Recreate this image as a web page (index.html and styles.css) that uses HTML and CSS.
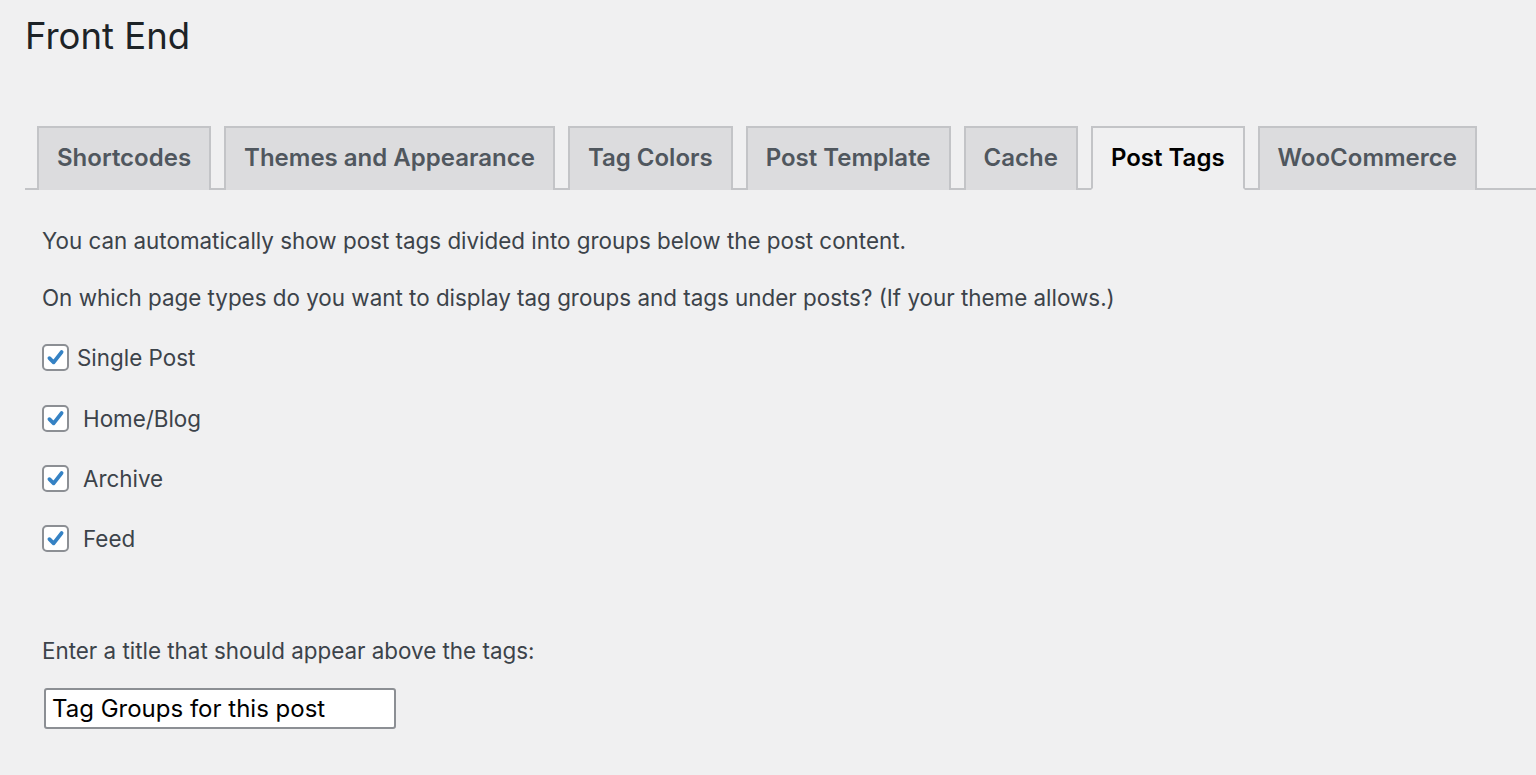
FILE: index.html
```html
<!DOCTYPE html>
<html lang="en">
<head>
    <meta charset="UTF-8">
    <meta name="viewport" content="width=device-width, initial-scale=1.0">
    <title>Front End</title>
    <link rel="stylesheet" href="styles.css">
</head>
<body>
    <div class="wrap">
        <h1>Front End</h1>

        <nav class="nav-tabs">
            <a href="#" class="nav-tab">Shortcodes</a>
            <a href="#" class="nav-tab">Themes and Appearance</a>
            <a href="#" class="nav-tab">Tag Colors</a>
            <a href="#" class="nav-tab">Post Template</a>
            <a href="#" class="nav-tab">Cache</a>
            <a href="#" class="nav-tab nav-tab-active">Post Tags</a>
            <a href="#" class="nav-tab">WooCommerce</a>
        </nav>

        <div class="tab-content">
            <p>You can automatically show post tags divided into groups below the post content.</p>
            <p>On which page types do you want to display tag groups and tags under posts? (If your theme allows.)</p>

            <ul class="checks">
                <li class="check-row check-tight">
                    <span class="box"><svg viewBox="0 0 20 20"><path d="M4.2 10.6 L8.2 14.6 L15.8 4.8"/></svg></span>
                    <label>Single Post</label>
                </li>
                <li class="check-row">
                    <span class="box"><svg viewBox="0 0 20 20"><path d="M4.2 10.6 L8.2 14.6 L15.8 4.8"/></svg></span>
                    <label>Home/Blog</label>
                </li>
                <li class="check-row">
                    <span class="box"><svg viewBox="0 0 20 20"><path d="M4.2 10.6 L8.2 14.6 L15.8 4.8"/></svg></span>
                    <label>Archive</label>
                </li>
                <li class="check-row">
                    <span class="box"><svg viewBox="0 0 20 20"><path d="M4.2 10.6 L8.2 14.6 L15.8 4.8"/></svg></span>
                    <label>Feed</label>
                </li>
            </ul>

            <p class="title-label">Enter a title that should appear above the tags:</p>
            <input type="text" class="title-input" value="Tag Groups for this post">
        </div>
    </div>
</body>
</html>
```

FILE: styles.css
```css
body {
    margin: 0;
    background-color: #f0f0f1;
    color: #3c434a;
    font-family: Inter, "Noto Sans", sans-serif;
}
.wrap {
    padding: 10px 0 0 25px;
}
h1 {
    font-size: 36.5px;
    font-weight: 400;
    color: #1d2327;
    margin: 0;
    line-height: 52px;
}

/* tabs */
.nav-tabs {
    display: flex;
    gap: 13px;
    margin-top: 64px;
    padding-left: 12px;
    border-bottom: 2px solid #c3c4c7;
}
.nav-tab {
    display: block;
    background-color: #dcdcde;
    border: 2px solid #c3c4c7;
    border-bottom: none;
    color: #50575e;
    font-size: 24px;
    font-weight: 600;
    line-height: 60px;
    padding: 0 18px;
    margin-bottom: -2px;
    text-decoration: none;
}
.nav-tab-active {
    background-color: #f0f0f1;
    color: #000;
    border-bottom: 2px solid #f0f0f1;
}

/* content */
.tab-content {
    padding-left: 17px;
    font-size: 22.4px;
}
.tab-content p {
    margin: 0;
    line-height: 32px;
}
.tab-content p:first-child {
    margin-top: 35px;
}
.tab-content p + p {
    margin-top: 25px;
}
.checks {
    list-style: none;
    margin: 27px 0 0 0;
    padding: 0;
}
.check-row {
    display: flex;
    align-items: center;
    gap: 14px;
    height: 32px;
    margin-bottom: 28px;
}
.check-tight {
    gap: 8px;
    margin-bottom: 29px;
}
.box {
    width: 23px;
    height: 23px;
    border: 2px solid #8c8f94;
    border-radius: 5px;
    background-color: #fff;
    display: flex;
    align-items: center;
    justify-content: center;
}
.box svg {
    width: 21px;
    height: 21px;
    fill: none;
    stroke: #3582c4;
    stroke-width: 3.6;
    stroke-linecap: round;
    stroke-linejoin: round;
}
.tab-content .title-label {
    margin-top: 81px;
}
.title-input {
    display: block;
    margin: 21px 0 0 2px;
    width: 352px;
    height: 41px;
    box-sizing: border-box;
    border: 2px solid #8c8f94;
    border-radius: 3px;
    background: #fff;
    padding: 0 6px;
    font-family: Inter, "Noto Sans", sans-serif;
    font-size: 24px;
    color: #000;
}
```
